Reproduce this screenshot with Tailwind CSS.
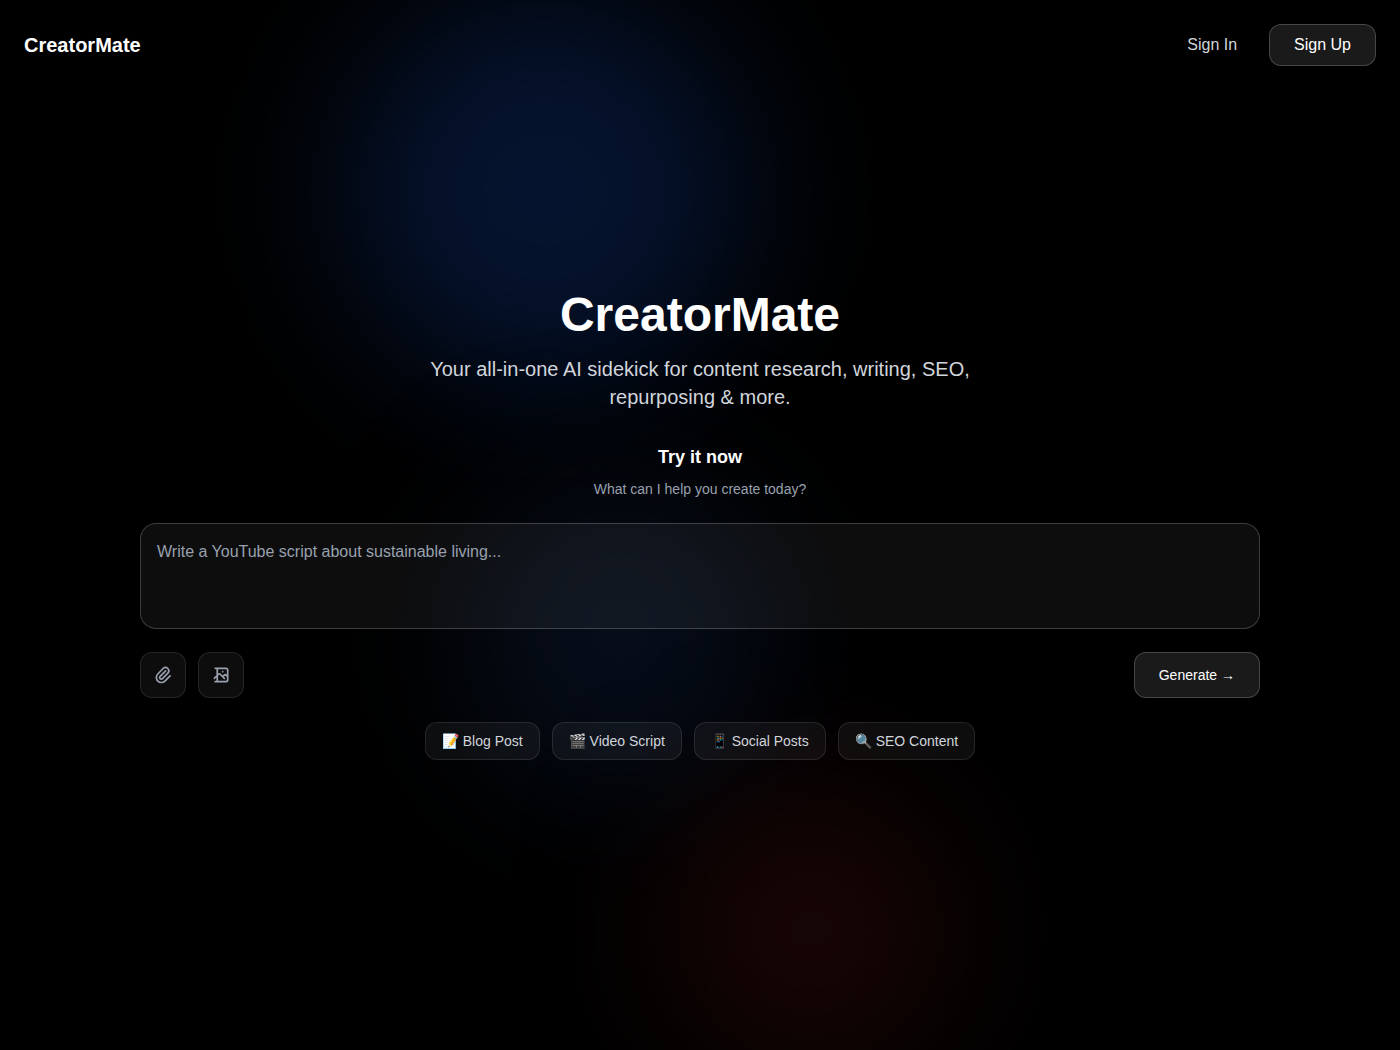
<!DOCTYPE html>
<html lang="en">
<head>
    <meta charset="UTF-8">
    <meta name="viewport" content="width=device-width, initial-scale=1.0">
    <title>CreatorMate</title>
    <script src="https://cdn.jsdelivr.net/npm/@tailwindcss/browser@4"></script>
</head>
<body class="bg-black text-white font-['Liberation_Sans',Arial,sans-serif]">
    <div class="relative min-h-screen overflow-hidden flex flex-col">
        <!-- Background glow -->
        <div class="absolute inset-0 pointer-events-none" aria-hidden="true">
            <div class="absolute left-[345px] -top-[10px] w-[400px] h-[400px] rounded-full bg-[#05132e] blur-[72px]"></div>
            <div class="absolute left-[470px] top-[490px] w-[300px] h-[300px] rounded-full bg-[#060d1a] blur-[72px]"></div>
            <div class="absolute left-[670px] top-[790px] w-[280px] h-[280px] rounded-full bg-[#190505] blur-[72px]"></div>
        </div>

        <header class="relative flex items-center justify-between p-6">
            <a href="#" class="text-xl font-bold">CreatorMate</a>
            <nav class="flex items-center gap-8">
                <a href="#" class="text-gray-300">Sign In</a>
                <a href="#" class="px-6 py-2 rounded-xl bg-white/10 border border-white/20">Sign Up</a>
            </nav>
        </header>

        <main class="relative flex-1 flex flex-col items-center justify-center px-6 pb-[89px]">
            <h1 class="text-5xl font-bold mb-4">CreatorMate</h1>
            <p class="max-w-xl text-xl text-center text-gray-300 mb-8">Your all-in-one AI sidekick for content research, writing, SEO, repurposing &amp; more.</p>
            <h2 class="text-lg font-bold mb-2">Try it now</h2>
            <label for="prompt" class="text-sm text-gray-400 mb-6">What can I help you create today?</label>

            <form class="w-full max-w-[1120px]">
                <textarea id="prompt" placeholder="Write a YouTube script about sustainable living..." class="block w-full h-[106px] p-4 rounded-2xl bg-white/5 border border-white/20 placeholder:text-gray-400 resize-none mb-[23px]"></textarea>
                <div class="flex items-center justify-between mb-6">
                    <div class="flex gap-3">
                        <button type="button" aria-label="Attach file" class="p-3 rounded-xl bg-white/5 border border-white/10 text-gray-400">
                            <svg class="w-5 h-5" fill="none" stroke="currentColor" stroke-width="2" stroke-linecap="round" stroke-linejoin="round" viewBox="0 0 24 24">
                                <path d="M15.172 7l-6.586 6.586a2 2 0 102.828 2.828l6.414-6.586a4 4 0 00-5.656-5.656l-6.415 6.585a6 6 0 108.486 8.486L20.5 13" />
                            </svg>
                        </button>
                        <button type="button" aria-label="Add image" class="p-3 rounded-xl bg-white/5 border border-white/10 text-gray-400">
                            <svg class="w-5 h-5" fill="none" stroke="currentColor" stroke-width="2" stroke-linecap="round" stroke-linejoin="round" viewBox="0 0 24 24">
                                <path d="M4 16l4.586-4.586a2 2 0 012.828 0L16 16m-2-2l1.586-1.586a2 2 0 012.828 0L20 14m-6-6h.01M6 20h12a2 2 0 002-2V6a2 2 0 00-2-2H5m2.500 0v16H5" />
                            </svg>
                        </button>
                    </div>
                    <button type="submit" class="h-[46px] px-6 rounded-xl bg-white/10 border border-white/20 text-sm">Generate →</button>
                </div>
                <div class="flex flex-wrap justify-center gap-3 text-sm text-gray-300">
                    <button type="button" class="px-4 py-2 rounded-xl bg-white/5 border border-white/10">📝 Blog Post</button>
                    <button type="button" class="px-4 py-2 rounded-xl bg-white/5 border border-white/10">🎬 Video Script</button>
                    <button type="button" class="px-4 py-2 rounded-xl bg-white/5 border border-white/10">📱 Social Posts</button>
                    <button type="button" class="px-4 py-2 rounded-xl bg-white/5 border border-white/10">🔍 SEO Content</button>
                </div>
            </form>
        </main>
    </div>
</body>
</html>
